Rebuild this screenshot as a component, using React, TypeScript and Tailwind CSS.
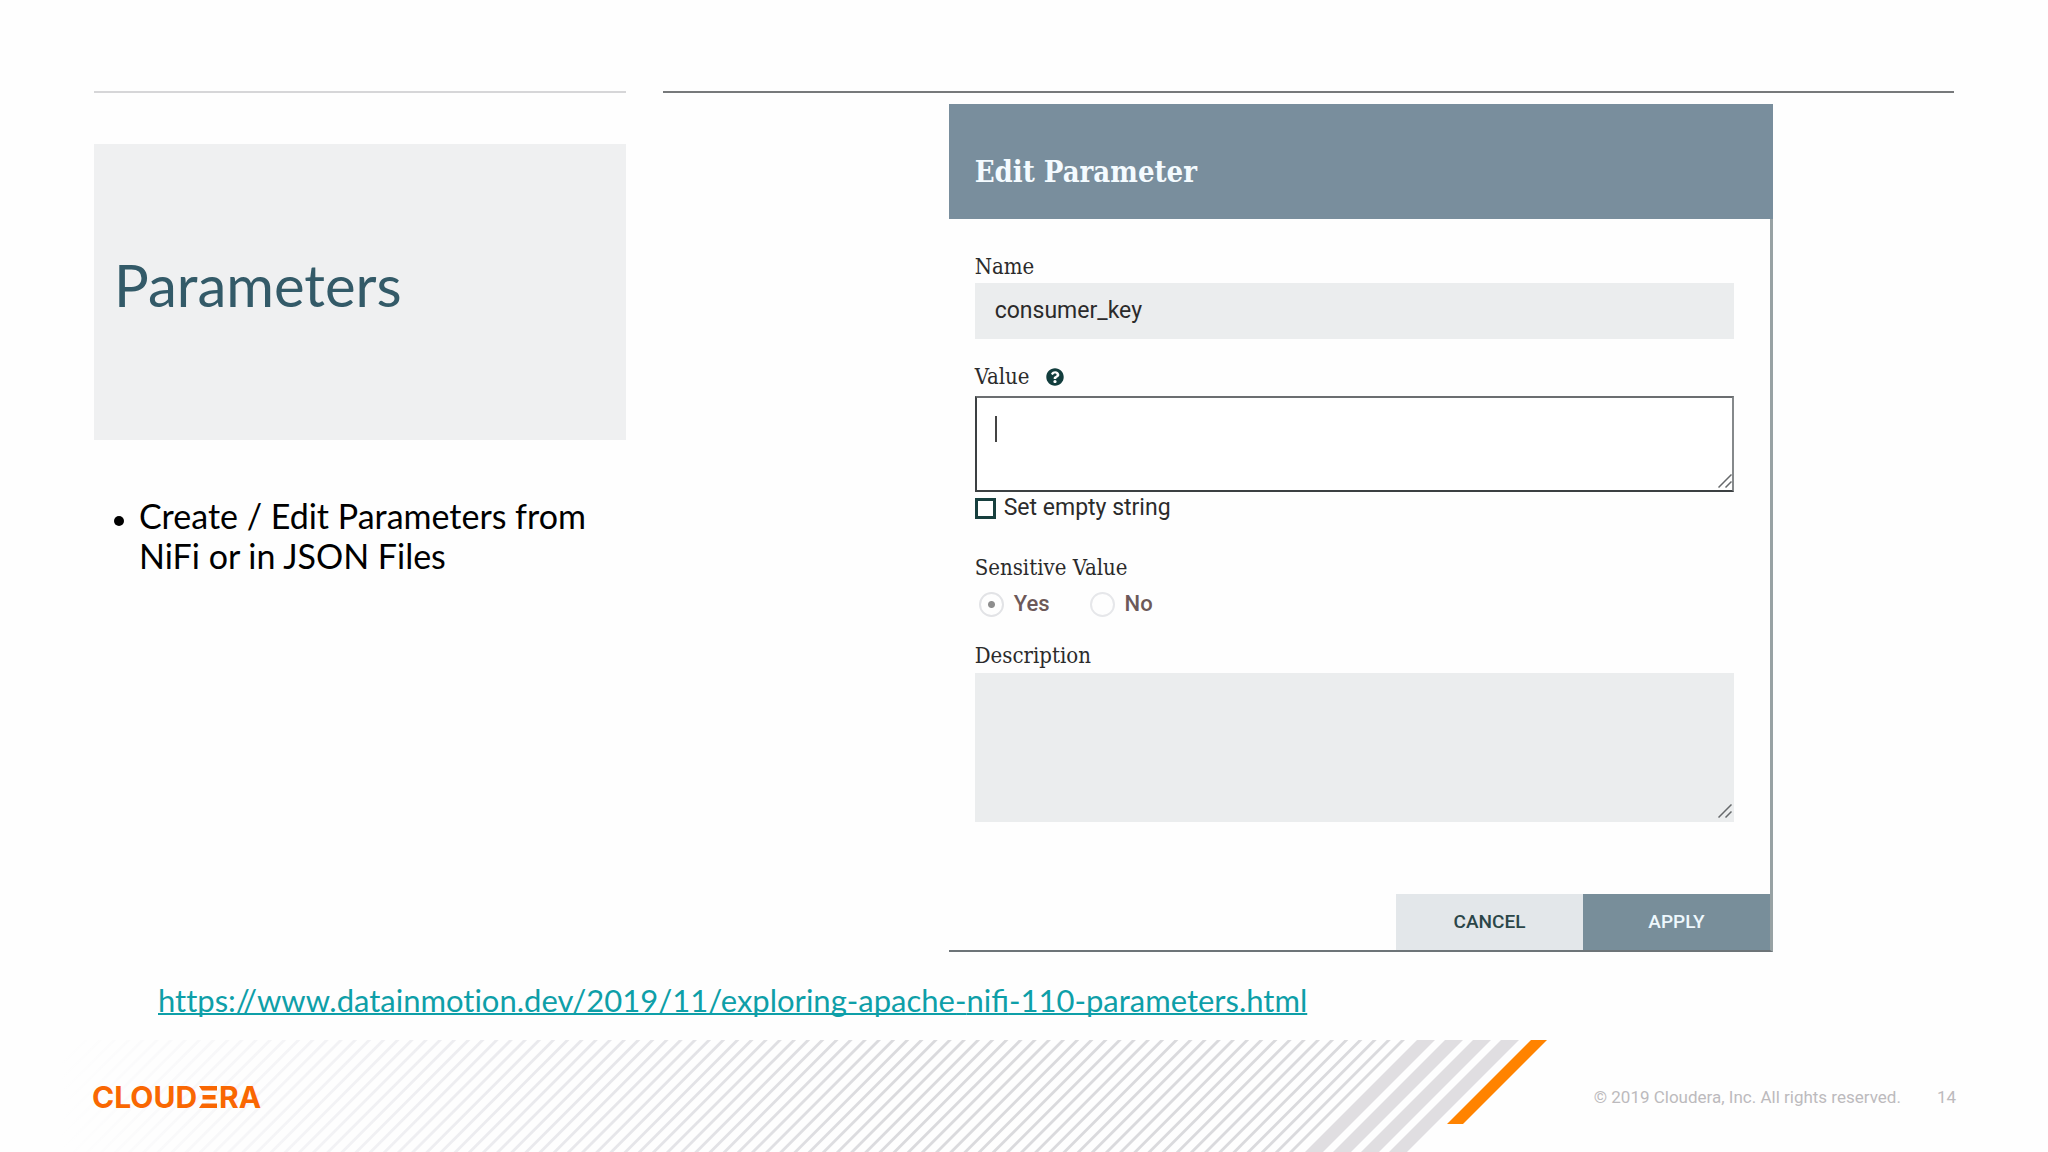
import { FaQuestionCircle } from "react-icons/fa";

function ResizeHandle() {
  return (
    <svg
      className="pointer-events-none absolute right-0.5 bottom-1 h-3.5 w-3.5"
      viewBox="0 0 14 14"
      fill="none"
      stroke="#66696b"
      strokeWidth="1.5"
      aria-hidden="true"
    >
      <path d="M0.5 13.5 13.5 0.5M7.5 13.5 13.5 7.5" />
    </svg>
  );
}

function Logo() {
  return (
    <div
      role="img"
      aria-label="Cloudera"
      className="relative flex items-center pt-0.5 font-['Inter',sans-serif] text-[30px] leading-8 font-bold text-[#f96702]"
    >
      <span>CLOUD</span>
      <svg className="mx-0.5 h-[22px] w-[18px]" viewBox="0 0 18 22" fill="currentColor" aria-hidden="true">
        <path d="M0 0h18v4.500H3zM3.500 9h13v4.500h-13zM3 17.500h15V22H0z" />
      </svg>
      <span>RA</span>
    </div>
  );
}

const THIN_LINES = Array.from({ length: 94 }, (_, i) => 1405 - i * 14.16);
const WIDE_BANDS = [1417, 1445, 1473, 1501];

function Stripes() {
  return (
    <svg className="absolute top-0 left-0 h-28 w-[1560px]" viewBox="0 0 1560 112" aria-hidden="true">
      <defs>
        <linearGradient id="fade" gradientUnits="userSpaceOnUse" x1="60" y1="0" x2="900" y2="0">
          <stop offset="0" stopColor="#dadae2" stopOpacity="0" />
          <stop offset="0.3" stopColor="#dadae2" stopOpacity="0.3" />
          <stop offset="1" stopColor="#dadadd" />
        </linearGradient>
      </defs>
      {THIN_LINES.map((x) => (
        <path key={x} fill="url(#fade)" d={`M${x - 4} 0h4l-112 112h-4z`} />
      ))}
      {WIDE_BANDS.map((x) => (
        <path key={x} fill="#e0dee1" d={`M${x} 0h18l-112 112h-18z`} />
      ))}
      <path fill="#ff8300" d="M1531 0h16l-84 84h-16z" />
    </svg>
  );
}

function EditParameter() {
  return (
    <form
      className="mt-[11px] mr-[181px] ml-[286px] border-r-3 border-b-2 border-r-[#98a2a4] border-b-[#6d7478] font-['Roboto',sans-serif] text-[#2b2b2b]"
      onSubmit={(e) => e.preventDefault()}
    >
      <div className="-mr-[3px] flex h-[115px] items-center bg-[#798e9d] pt-5 pl-[26px]">
        <h2 className="font-['DejaVu_Serif_Condensed','DejaVu_Serif',serif] text-[29px] leading-9 font-bold text-[#f4fbff]">
          Edit Parameter
        </h2>
      </div>

      <div className="flex flex-col pt-8 pr-9 pl-[26px]">
        <label htmlFor="name" className="font-['DejaVu_Serif_Condensed','DejaVu_Serif',serif] text-[22px] leading-8">
          Name
        </label>
        <input
          id="name"
          defaultValue="consumer_key"
          className="h-14 w-full bg-[#ebedee] px-5 pb-0.5 text-[23px] outline-none"
        />

        <div className="mt-[22px] flex items-center gap-4">
          <label htmlFor="value" className="font-['DejaVu_Serif_Condensed','DejaVu_Serif',serif] text-[22px] leading-8">
            Value
          </label>
          <FaQuestionCircle className="h-[18px] w-[18px] text-[#123d3d]" />
        </div>
        <div className="relative mt-[3px]">
          <textarea
            id="value"
            className="block h-24 w-full resize-none border-2 border-t-[#6b6e70] border-r-[#85898b] border-b-[#3c4042] border-l-[#3c4042] bg-white px-5 py-4 text-[23px] outline-none"
          />
          <span className="absolute top-5 left-5 h-6.5 w-0.5 bg-[#444]" />
          <ResizeHandle />
        </div>

        <label className="flex items-center gap-2 text-[23px] leading-8">
          <input type="checkbox" className="h-[21px] w-[21px] appearance-none border-3 border-[#173f3e] bg-white" />
          Set empty string
        </label>

        <fieldset className="mt-7">
          <legend className="font-['DejaVu_Serif_Condensed','DejaVu_Serif',serif] text-[22px] leading-8">
            Sensitive Value
          </legend>
          <div className="flex gap-10 pt-1 pl-1 text-[22px] leading-8 font-medium text-[#6d5959]">
            <label className="flex items-center gap-2.5">
              <input
                type="radio"
                name="sensitive"
                defaultChecked
                className="h-[25px] w-[25px] appearance-none rounded-full border-2 border-[#e2e3e6] bg-[radial-gradient(circle,#8e8e8e_3px,transparent_4px)]"
              />
              Yes
            </label>
            <label className="flex items-center gap-2.5">
              <input
                type="radio"
                name="sensitive"
                className="h-[25px] w-[25px] appearance-none rounded-full border-2 border-[#e6e7ea]"
              />
              No
            </label>
          </div>
        </fieldset>

        <label
          htmlFor="description"
          className="mt-5 font-['DejaVu_Serif_Condensed','DejaVu_Serif',serif] text-[22px] leading-8"
        >
          Description
        </label>
        <div className="relative mt-px">
          <textarea
            id="description"
            className="block h-[149px] w-full resize-none bg-[#ebedee] px-5 py-4 text-[23px] outline-none"
          />
          <ResizeHandle />
        </div>
      </div>

      <div className="mt-[72px] flex justify-end text-[19px] font-medium">
        <button type="button" className="h-14 w-[187px] bg-[#e3e7ea] text-[#2b4648]">
          CANCEL
        </button>
        <button type="submit" className="h-14 w-[187px] bg-[#788e9a] text-[#eef8fd]">
          APPLY
        </button>
      </div>
    </form>
  );
}

export default function App() {
  return (
    <div className="flex min-h-screen flex-col bg-[#fefefe] font-['Lato',sans-serif]">
      <main className="grid grow grid-cols-[7fr_17fr] gap-x-[37px] px-[94px] pt-[91px]">
        <section className="border-t-2 border-[#d6d6d8]">
          <div className="mt-[51px] flex h-[296px] items-center bg-[#eff0f1] px-5 pb-3.5">
            <h1 className="text-[58px] leading-16 text-[#335a68]">Parameters</h1>
          </div>
          <ul className="mt-14 pl-5">
            <li className="flex gap-[15px] text-[34px] leading-10 text-black">
              <span className="mt-5 h-2.5 w-2.5 shrink-0 rounded-full bg-black" />
              <span>
                Create / Edit Parameters from
                <br />
                NiFi or in JSON Files
              </span>
            </li>
          </ul>
        </section>

        <section className="border-t-2 border-[#77797b]">
          <EditParameter />
        </section>
      </main>

      <div className="flex h-22 items-center pt-2 pl-[158px]">
        <a
          href="https://www.datainmotion.dev/2019/11/exploring-apache-nifi-110-parameters.html"
          className="text-[31px] leading-10 text-[#0e9fa8] underline decoration-2 [font-variant-ligatures:none] [text-decoration-skip-ink:none]"
        >
          https://www.datainmotion.dev/2019/11/exploring-apache-
          <span className="[font-variant-ligatures:normal]">nifi</span>
          -110-parameters.html
        </a>
      </div>

      <footer className="relative flex h-28 items-center justify-between overflow-hidden px-[92px]">
        <Stripes />
        <Logo />
        <div className="relative flex gap-9 pt-0.5 font-['Roboto',sans-serif] text-[17px] leading-6 text-[#bcbabd]">
          <span>© 2019 Cloudera, Inc. All rights reserved.</span>
          <span>14</span>
        </div>
      </footer>
    </div>
  );
}
